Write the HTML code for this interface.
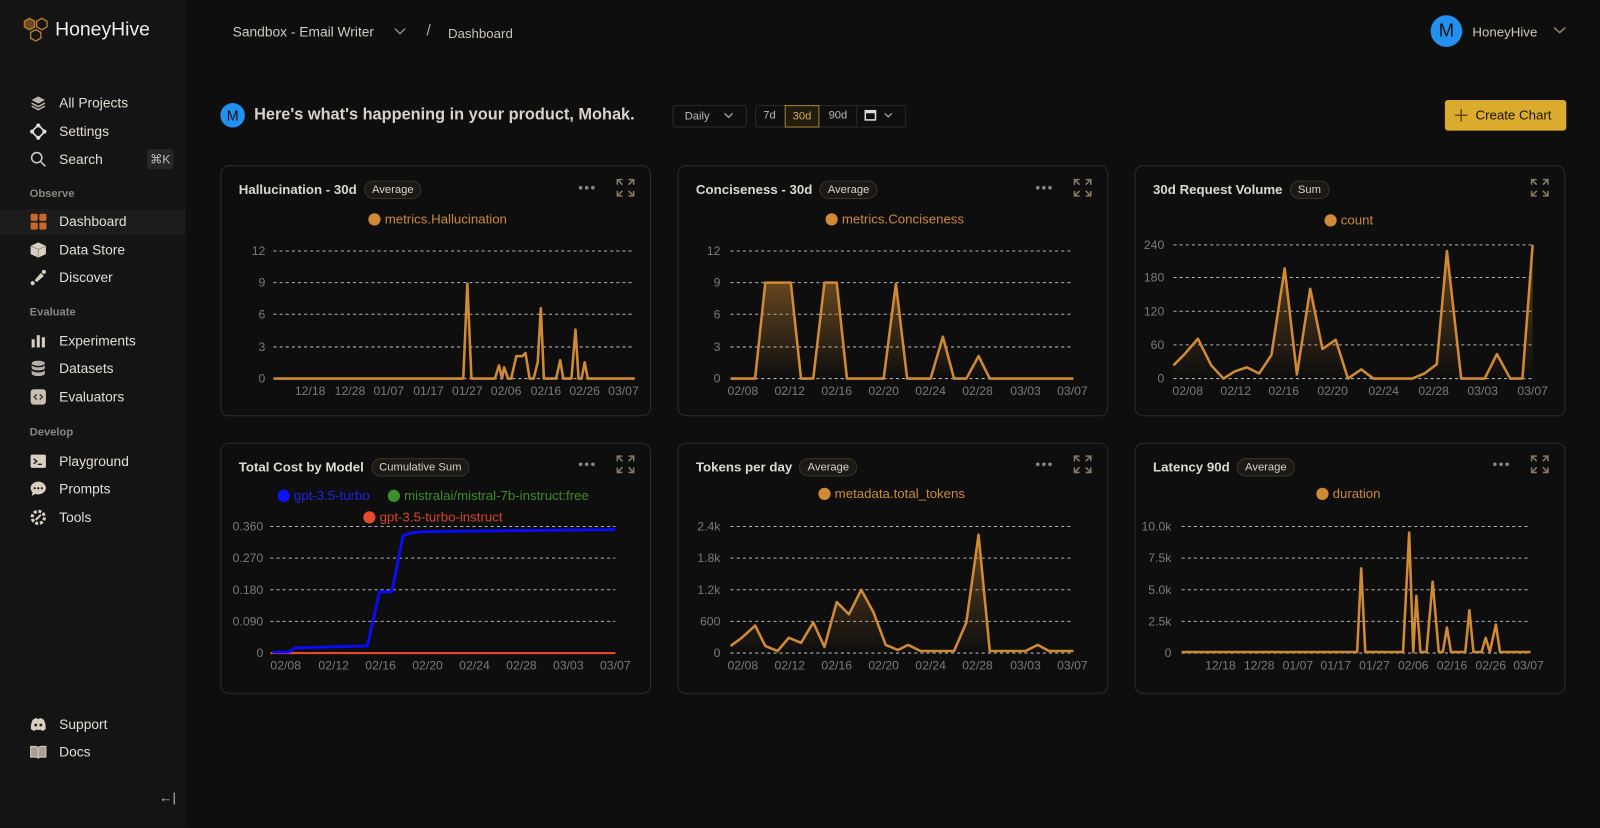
<!DOCTYPE html>
<html><head><meta charset="utf-8"><style>
*{margin:0;padding:0;box-sizing:border-box}
html,body{width:1600px;height:827px;overflow:hidden;background:#0e0e0e;font-family:"Liberation Sans",sans-serif}
#w{position:absolute;left:0;top:0;width:1568px;height:811px;transform:scale(1.0204);transform-origin:0 0;background:#0e0e0e}
.a{position:absolute}
#side{left:0;top:0;width:182px;height:811px;background:#141414}
.nav{position:absolute;left:58px;font-size:13.5px;color:#e2ddd5;transform:translateY(-50%)}
.sec{position:absolute;left:29px;font-size:11px;font-weight:bold;color:#8a8580;transform:translateY(-50%)}
.ic{position:absolute;left:29px;width:17px;height:17px;transform:translateY(-50%)}
.card{position:absolute;width:422px;height:246px;border:1px solid #2b2b2b;border-radius:8px;background:#0e0e0e}
.ct{position:absolute;left:17px;top:14px;font-size:13px;font-weight:bold;color:#dcd8d2;white-space:nowrap}
.pill{display:inline-block;margin-left:7px;padding:2px 7px;border:1px solid #3a332a;background:#1c1915;border-radius:9px;font-size:11px;font-weight:normal;color:#d8d0c4;vertical-align:1px}
</style></head><body><div id="w">
<div id="side" class="a"></div>
<div class="a" style="left:0;top:205px;width:182px;height:25px;background:#1c1c1c"></div>
<svg class="a" style="left:22px;top:16px" width="28" height="30" viewBox="0 0 28 30"><g fill="none" stroke="#b07a2e" stroke-width="1.4"><polygon points="7,2 12,4.8 12,10.4 7,13.2 2,10.4 2,4.8" fill="#6b4a1e"/><polygon points="19,2 24,4.8 24,10.4 19,13.2 14,10.4 14,4.8"/><polygon points="13,13 18,15.8 18,21.4 13,24.2 8,21.4 8,15.8"/></g></svg>
<div class="a" style="left:54px;top:19px;font-size:19px;color:#eee">HoneyHive</div>
<div class="a" style="left:228px;top:24px;font-size:13.5px;color:#cfcac3">Sandbox - Email Writer</div>
<svg class="a" style="left:386px;top:27px" width="12" height="8"><path d="M1 1l5 5 5-5" stroke="#999" fill="none" stroke-width="1.3"/></svg>
<div class="a" style="left:418px;top:22px;font-size:15px;color:#aaa">/</div>
<div class="a" style="left:439px;top:25px;font-size:13px;color:#c8c3bc">Dashboard</div>
<div class="a" style="left:1402px;top:15px;width:31px;height:31px;border-radius:50%;background:#2290ee;color:#111;font-size:18px;text-align:center;line-height:31px">M</div>
<div class="a" style="left:1443px;top:24px;font-size:13px;color:#cfc8bc">HoneyHive</div>
<svg class="a" style="left:1522px;top:26px" width="13" height="8"><path d="M1 1l5.5 5 5.5-5" stroke="#8a7d6a" fill="none" stroke-width="1.6"/></svg>

<svg class="ic" style="top:101px" viewBox="0 0 17 17"><path d="M8.5 2L15 5.5 8.5 9 2 5.5z" fill="#bcb5aa"/><path d="M2 8.5l6.5 3.5 6.5-3.5M2 11.5l6.5 3.5 6.5-3.5" stroke="#bcb5aa" fill="none" stroke-width="1.5"/></svg>
<div class="nav" style="top:101px">All Projects</div>
<svg class="ic" style="top:129px" viewBox="0 0 17 17"><path d="M8.5 2L15 8.5 8.5 15 2 8.5z" stroke="#ddd" fill="none" stroke-width="1.6"/><circle cx="8.5" cy="2.5" r="2" fill="#ddd"/><circle cx="2.5" cy="8.5" r="2" fill="#ddd"/><circle cx="14.5" cy="8.5" r="2" fill="#ddd"/><circle cx="8.5" cy="14.5" r="2" fill="#ddd"/></svg>
<div class="nav" style="top:129px">Settings</div>
<svg class="ic" style="top:156px" viewBox="0 0 17 17"><circle cx="7" cy="7" r="5" stroke="#ccc" fill="none" stroke-width="1.5"/><path d="M11 11l4.5 4.5" stroke="#ccc" stroke-width="1.5"/></svg>
<div class="nav" style="top:156px">Search</div>
<div class="a" style="left:144px;top:146px;width:26px;height:20px;background:#262626;border-radius:3px;color:#bbb;font-size:12px;text-align:center;line-height:20px">⌘K</div>
<div class="sec" style="top:190px">Observe</div>
<svg class="ic" style="top:217px" viewBox="0 0 17 17"><rect x="1" y="1" width="7" height="7" rx="1.5" fill="#c8692a"/><rect x="9.5" y="1" width="7" height="7" rx="1.5" fill="#c8692a"/><rect x="1" y="9.5" width="7" height="7" rx="1.5" fill="#c8692a"/><rect x="9.5" y="9.5" width="7" height="7" rx="1.5" fill="#c8692a"/></svg>
<div class="nav" style="top:217px">Dashboard</div>
<svg class="ic" style="top:245px" viewBox="0 0 17 17"><path d="M8.5 1L16 4.5v8L8.5 16 1 12.5v-8z" fill="#d8cfc0"/><path d="M1 4.5l7.5 3.5L16 4.5M8.5 8v8" stroke="#9a9080" fill="none"/></svg>
<div class="nav" style="top:245px">Data Store</div>
<svg class="ic" style="top:272px" viewBox="0 0 17 17"><path d="M5 11l6-7 3 3-7 6z" fill="#d8cfc0"/><circle cx="3" cy="14" r="2" fill="#d8cfc0"/><circle cx="14" cy="3" r="2" fill="#d8cfc0"/></svg>
<div class="nav" style="top:272px">Discover</div>
<div class="sec" style="top:306px">Evaluate</div>
<svg class="ic" style="top:334px" viewBox="0 0 17 17"><rect x="2" y="7" width="3" height="8" fill="#d8cfc0"/><rect x="7" y="3" width="3" height="12" fill="#d8cfc0"/><rect x="12" y="5" width="3" height="10" fill="#d8cfc0"/></svg>
<div class="nav" style="top:334px">Experiments</div>
<svg class="ic" style="top:361px" viewBox="0 0 17 17"><ellipse cx="8.5" cy="3.5" rx="6.5" ry="2.5" fill="#b8b0a4"/><path d="M2 5v3c0 1.5 3 2.5 6.5 2.5S15 9.5 15 8V5c0 1.5-3 2.5-6.5 2.5S2 6.5 2 5zm0 5v3.5c0 1.5 3 2.5 6.5 2.5s6.5-1 6.5-2.5V10c0 1.5-3 2.5-6.5 2.5S2 11.5 2 10z" fill="#b8b0a4"/></svg>
<div class="nav" style="top:361px">Datasets</div>
<svg class="ic" style="top:389px" viewBox="0 0 17 17"><rect x="1" y="1" width="15" height="15" rx="3" fill="#c9bfb0"/><path d="M7 6l-2.5 2.5L7 11M10 6l2.5 2.5L10 11" stroke="#333" fill="none" stroke-width="1.3"/></svg>
<div class="nav" style="top:389px">Evaluators</div>
<div class="sec" style="top:424px">Develop</div>
<svg class="ic" style="top:452px" viewBox="0 0 17 17"><rect x="1" y="2" width="15" height="13" rx="1.5" fill="#d8cfc0"/><path d="M4 6l3 2.5L4 11M8 11.5h4" stroke="#222" fill="none" stroke-width="1.4"/></svg>
<div class="nav" style="top:452px">Playground</div>
<svg class="ic" style="top:479px" viewBox="0 0 17 17"><path d="M8.5 1.5C12.6 1.5 16 4.3 16 7.8S12.6 14 8.5 14c-1 0-2-.2-2.8-.5L2 15.5l1-3.2C1.8 11.1 1 9.5 1 7.8 1 4.3 4.4 1.5 8.5 1.5z" fill="#d8cfc0"/><circle cx="5" cy="8" r="1.1" fill="#222"/><circle cx="8.5" cy="8" r="1.1" fill="#222"/><circle cx="12" cy="8" r="1.1" fill="#222"/></svg>
<div class="nav" style="top:479px">Prompts</div>
<svg class="ic" style="top:507px" viewBox="0 0 17 17"><circle cx="8.5" cy="8.5" r="6" stroke="#d8cfc0" stroke-width="3" fill="none" stroke-dasharray="3 1.7"/><path d="M6 11l5-5" stroke="#d8cfc0" stroke-width="2"/></svg>
<div class="nav" style="top:507px">Tools</div>
<svg class="ic" style="top:710px" viewBox="0 0 17 17"><path d="M3 4c2-1.5 3.5-1.8 4-1.8l.4.8h2.2l.4-.8c.5 0 2 .3 4 1.8 1.5 3 2 6 1.7 9-1.3 1-2.6 1.6-3.7 1.8l-.8-1.3c-1.5.4-4 .4-5.4 0l-.8 1.3C3.9 14.6 2.6 14 1.3 13 1 10 1.5 7 3 4z" fill="#d8cfc0"/><circle cx="6" cy="9" r="1.4" fill="#222"/><circle cx="11" cy="9" r="1.4" fill="#222"/></svg>
<div class="nav" style="top:710px">Support</div>
<svg class="ic" style="top:737px" viewBox="0 0 17 17"><path d="M1 3h5c1.5 0 2.5 1 2.5 2v10c0-1-1-1.5-2.5-1.5H1zM16 3h-5C9.5 3 8.5 4 8.5 5v10c0-1 1-1.5 2.5-1.5h5z" fill="#a8a094" stroke="#d8cfc0"/></svg>
<div class="nav" style="top:737px">Docs</div>
<div class="a" style="left:156px;top:774px;font-size:13px;color:#bbb">←|</div>

<div class="a" style="left:216px;top:101px;width:24px;height:24px;border-radius:50%;background:#2290ee;color:#111;font-size:14px;text-align:center;line-height:24px">M</div>
<div class="a" style="left:249px;top:104px;font-size:16px;font-weight:bold;color:#d8d2ca">Here's what's happening in your product, Mohak.</div>
<div class="a" style="left:659px;top:103px;width:73px;height:22px;border:1px solid #2a2a2a;border-radius:3px;font-size:11px;color:#bbb;line-height:20px;padding-left:11px">Daily</div>
<svg class="a" style="left:709px;top:110px" width="10" height="7"><path d="M1 1l4 4 4-4" stroke="#aaa" fill="none" stroke-width="1.2"/></svg>
<div class="a" style="left:740px;top:103px;width:148px;height:22px;border:1px solid #2a2a2a;border-radius:3px"></div>
<div class="a" style="left:748px;top:107px;font-size:11px;color:#bbb">7d</div>
<div class="a" style="left:769px;top:103px;width:34px;height:22px;border:1px solid #a3822e;background:#221c10;font-size:11px;color:#d4aa4c;text-align:center;line-height:20px">30d</div>
<div class="a" style="left:812px;top:107px;font-size:11px;color:#bbb">90d</div>
<div class="a" style="left:839px;top:104px;width:1px;height:20px;background:#2a2a2a"></div>
<svg class="a" style="left:847px;top:107px" width="30" height="12"><rect x="1" y="1.5" width="10" height="9" fill="none" stroke="#ddd" stroke-width="1.5"/><rect x="1" y="1.5" width="10" height="2.5" fill="#ddd"/><path d="M20 4l3.5 3.5L27 4" stroke="#aaa" fill="none" stroke-width="1.2"/></svg>
<div class="a" style="left:1416px;top:98px;width:119px;height:30px;background:#dbab2d;border-radius:3px;font-size:13px;color:#1a1407;line-height:30px;padding-left:30px">Create Chart</div>
<svg class="a" style="left:1425px;top:106px" width="14" height="14"><path d="M7 1v12M1 7h12" stroke="#5a4510" stroke-width="1.4"/></svg>

<div class="card" style="left:216px;top:162px"><div class="ct">Hallucination - 30d<span class="pill">Average</span></div></div>
<div class="card" style="left:664px;top:162px"><div class="ct">Conciseness - 30d<span class="pill">Average</span></div></div>
<div class="card" style="left:1112px;top:162px"><div class="ct">30d Request Volume<span class="pill">Sum</span></div></div>
<div class="card" style="left:216px;top:434px"><div class="ct">Total Cost by Model<span class="pill">Cumulative Sum</span></div></div>
<div class="card" style="left:664px;top:434px"><div class="ct">Tokens per day<span class="pill">Average</span></div></div>
<div class="card" style="left:1112px;top:434px"><div class="ct">Latency 90d<span class="pill">Average</span></div></div>

<svg class="a" style="left:0;top:0" width="1568" height="811" font-family="Liberation Sans, sans-serif">
<defs>
<linearGradient id="g" x1="0" y1="0" x2="0" y2="1"><stop offset="0" stop-color="#d08a35" stop-opacity="0.45"/><stop offset="1" stop-color="#d08a35" stop-opacity="0"/></linearGradient>
<g id="dots"><circle cx="0" cy="0" r="1.8" fill="#8a8580"/><circle cx="6" cy="0" r="1.8" fill="#8a8580"/><circle cx="12" cy="0" r="1.8" fill="#8a8580"/></g>
<g id="exp" stroke="#8a7a62" stroke-width="1.5" fill="none"><path d="M0 5V0h5M0 0l5 5M16 5V0h-5M16 0l-5 5M0 11v5h5M0 16l5-5M16 11v5h-5M16 16l-5-5"/></g>
</defs>
<use href="#dots" x="569" y="184"/><use href="#exp" x="605" y="176"/>
<use href="#dots" x="1017" y="184"/><use href="#exp" x="1053" y="176"/>
<use href="#exp" x="1501" y="176"/>
<use href="#dots" x="569" y="455"/><use href="#exp" x="605" y="447"/>
<use href="#dots" x="1017" y="455"/><use href="#exp" x="1053" y="447"/>
<use href="#dots" x="1465" y="455"/><use href="#exp" x="1501" y="447"/>

<g stroke="#cfcfcf" stroke-dasharray="3 3" stroke-width="1" opacity="0.85">
<path d="M268 246H622M268 277H622M268 308H622M268 340H622M268 371H622"/>
<path d="M716 246H1052M716 277H1052M716 308H1052M716 340H1052M716 371H1052"/>
<path d="M1150 240H1502M1150 272H1502M1150 305H1502M1150 338H1502M1150 371H1502"/>
<path d="M265 516H603M265 547H603M265 578H603M265 609H603M265 640H603"/>
<path d="M716 516H1052M716 547H1052M716 578H1052M716 609H1052M716 640H1052"/>
<path d="M1158 516H1500M1158 547H1500M1158 578H1500M1158 609H1500M1158 640H1500"/>
</g>
<g font-size="12" fill="#7a7a7a" text-anchor="end">
<text x="260" y="250">12</text><text x="260" y="281">9</text><text x="260" y="312">6</text><text x="260" y="344">3</text><text x="260" y="375">0</text>
<text x="706" y="250">12</text><text x="706" y="281">9</text><text x="706" y="312">6</text><text x="706" y="344">3</text><text x="706" y="375">0</text>
<text x="1141" y="244">240</text><text x="1141" y="276">180</text><text x="1141" y="309">120</text><text x="1141" y="342">60</text><text x="1141" y="375">0</text>
<text x="258" y="520">0.360</text><text x="258" y="551">0.270</text><text x="258" y="582">0.180</text><text x="258" y="613">0.090</text><text x="258" y="644">0</text>
<text x="706" y="520">2.4k</text><text x="706" y="551">1.8k</text><text x="706" y="582">1.2k</text><text x="706" y="613">600</text><text x="706" y="644">0</text>
<text x="1148" y="520">10.0k</text><text x="1148" y="551">7.5k</text><text x="1148" y="582">5.0k</text><text x="1148" y="613">2.5k</text><text x="1148" y="644">0</text>
</g>
<g font-size="12" fill="#7a7a7a" text-anchor="middle">
<text x="304" y="387">12/18</text><text x="343" y="387">12/28</text><text x="381" y="387">01/07</text><text x="420" y="387">01/17</text><text x="458" y="387">01/27</text><text x="496" y="387">02/06</text><text x="535" y="387">02/16</text><text x="573" y="387">02/26</text><text x="611" y="387">03/07</text>
<text x="728" y="387">02/08</text><text x="774" y="387">02/12</text><text x="820" y="387">02/16</text><text x="866" y="387">02/20</text><text x="912" y="387">02/24</text><text x="958" y="387">02/28</text><text x="1005" y="387">03/03</text><text x="1051" y="387">03/07</text>
<text x="1164" y="387">02/08</text><text x="1211" y="387">02/12</text><text x="1258" y="387">02/16</text><text x="1306" y="387">02/20</text><text x="1356" y="387">02/24</text><text x="1405" y="387">02/28</text><text x="1453" y="387">03/03</text><text x="1502" y="387">03/07</text>
<text x="280" y="656">02/08</text><text x="327" y="656">02/12</text><text x="373" y="656">02/16</text><text x="419" y="656">02/20</text><text x="465" y="656">02/24</text><text x="511" y="656">02/28</text><text x="557" y="656">03/03</text><text x="603" y="656">03/07</text>
<text x="728" y="656">02/08</text><text x="774" y="656">02/12</text><text x="820" y="656">02/16</text><text x="866" y="656">02/20</text><text x="912" y="656">02/24</text><text x="958" y="656">02/28</text><text x="1005" y="656">03/03</text><text x="1051" y="656">03/07</text>
<text x="1196" y="656">12/18</text><text x="1234" y="656">12/28</text><text x="1272" y="656">01/07</text><text x="1309" y="656">01/17</text><text x="1347" y="656">01/27</text><text x="1385" y="656">02/06</text><text x="1423" y="656">02/16</text><text x="1461" y="656">02/26</text><text x="1498" y="656">03/07</text>
</g>
<g font-size="13" fill="#c98a3e">
<circle cx="367" cy="215" r="6" fill="#d08a35"/><text x="377" y="219">metrics.Hallucination</text>
<circle cx="815" cy="215" r="6" fill="#d08a35"/><text x="825" y="219">metrics.Conciseness</text>
<circle cx="1304" cy="216" r="6" fill="#d08a35"/><text x="1314" y="220">count</text>
<circle cx="808" cy="484" r="6" fill="#d08a35"/><text x="818" y="488">metadata.total_tokens</text>
<circle cx="1296" cy="484" r="6" fill="#d08a35"/><text x="1306" y="488">duration</text>
<circle cx="278" cy="486" r="6" fill="#1010ff"/><text x="288" y="490" fill="#2020e8">gpt-3.5-turbo</text>
<circle cx="386" cy="486" r="6" fill="#3a8f2a"/><text x="396" y="490" fill="#3f8a2c">mistralai/mistral-7b-instruct:free</text>
<circle cx="362" cy="507" r="6" fill="#e6492c"/><text x="372" y="511" fill="#d8452a">gpt-3.5-turbo-instruct</text>
</g>
<g fill="url(#g)" stroke="none">
<polygon points="716,371 740,371 750,277 775,277 785,371 797,371 808,277 820,277 830,371 866,371 878,278 889,371 912,371 924,330 935,371 947,371 959,349 970,371 1052,371"/>
<polygon points="1150,371 1150,358 1160,348 1174,332 1187,358 1199,371 1210,364 1222,360 1234,366 1246,348 1259,263 1271,367 1284,283 1296,342 1309,333 1321,371 1334,362 1346,371 1384,371 1396,366 1408,357 1418,246 1432,371 1455,371 1467,347 1480,371 1492,371 1502,240 1502,371"/>
<polygon points="716,640 716,633 727,625 740,613 750,633 762,638 773,625 785,630 797,610 808,634 820,590 832,602 844,578 856,600 868,632 880,637 890,632 902,638 935,638 947,610 959,524 970,638 1005,638 1017,632 1028,638 1052,638 1052,640"/>
</g>
<g stroke="#d08a35" stroke-width="2.5" fill="none" stroke-linejoin="round">
<polyline points="268,371 454,371 458,278 462,371 485,371 489,358 492,371 494,360 498,371 501,371 506,349 512,349 515,346 519,371 523,371 527,355 530,302 533,371 545,371 549,353 552,371 560,371 564,323 567,371 570,371 573,355 576,371 622,371"/>
<polyline points="716,371 740,371 750,277 775,277 785,371 797,371 808,277 820,277 830,371 866,371 878,278 889,371 912,371 924,330 935,371 947,371 959,349 970,371 1052,371"/>
<polyline points="1150,358 1160,348 1174,332 1187,358 1199,371 1210,364 1222,360 1234,366 1246,348 1259,263 1271,367 1284,283 1296,342 1309,333 1321,371 1334,362 1346,371 1384,371 1396,366 1408,357 1418,246 1432,371 1455,371 1467,347 1480,371 1492,371 1502,240"/>
<polyline points="716,633 727,625 740,613 750,633 762,638 773,625 785,630 797,610 808,634 820,590 832,602 844,578 856,600 868,632 880,637 890,632 902,638 935,638 947,610 959,524 970,638 1005,638 1017,632 1028,638 1052,638"/>
<polyline points="1158,639 1330,639 1334,557 1338,639 1375,639 1381,522 1385,639 1388,584 1392,639 1398,639 1404,570 1410,639 1414,639 1418,615 1422,639 1436,639 1440,598 1444,639 1452,639 1456,625 1460,639 1466,612 1470,639 1500,639"/>
</g>
<polyline points="265,640 603,640" stroke="#e6492c" stroke-width="2" fill="none"/>
<polyline points="267,639 283,639 289,635 360,633 372,580 384,580 395,525 404,522 416,521 603,519" stroke="#0a0aff" stroke-width="2.8" fill="none" stroke-linejoin="round"/>
</svg>
</div></body></html>
